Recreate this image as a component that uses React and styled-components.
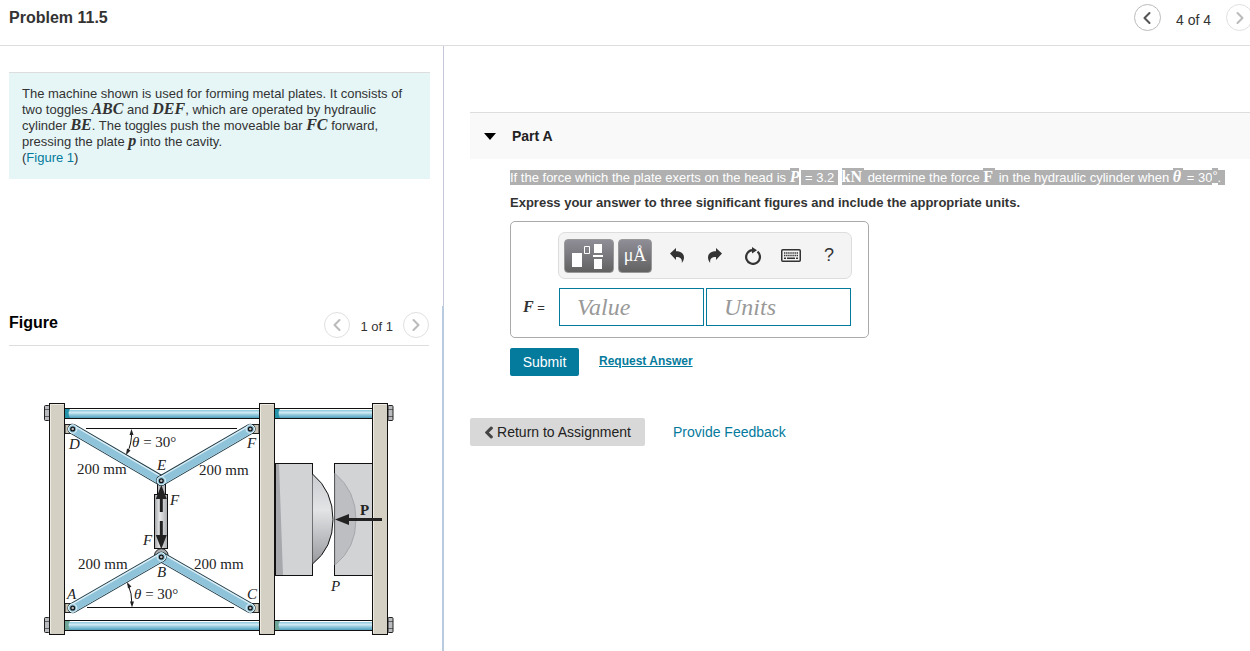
import React, { useState } from "react";
import styled, { createGlobalStyle } from "styled-components";
import { FiChevronLeft, FiChevronRight } from "react-icons/fi";
import { FaChevronLeft } from "react-icons/fa";

const App = () => {
  const [open, setOpen] = useState(true);
  const [value, setValue] = useState("");
  const [units, setUnits] = useState("");

  return (
    <>
      <GlobalStyle />
      <Page>
        <Header>
          <h1>Problem 11.5</h1>
          <Pager $size={27} $gap={15} $font={14}>
            <button type="button" aria-label="Previous problem">
              <FiChevronLeft />
            </button>
            <span>4 of 4</span>
            <button type="button" aria-label="Next problem" disabled>
              <FiChevronRight />
            </button>
          </Pager>
        </Header>

        <Content>
          <Side>
            <ProblemArea>
              <Intro>
                The machine shown is used for forming metal plates. It consists
                of two toggles <Var>ABC</Var> and <Var>DEF</Var>, which are
                operated by hydraulic cylinder <Var>BE</Var>. The toggles push
                the moveable bar <Var>FC</Var> forward, pressing the plate{" "}
                <Var>p</Var> into the cavity.
                <br />(<a href="#figure">Figure 1</a>)
              </Intro>
            </ProblemArea>
            <FigureArea id="figure">
              <FigureHead>
                <h2>Figure</h2>
                <Pager $size={26} $gap={10} $font={13}>
                  <button type="button" aria-label="Previous figure" disabled>
                    <FiChevronLeft />
                  </button>
                  <span>1 of 1</span>
                  <button type="button" aria-label="Next figure" disabled>
                    <FiChevronRight />
                  </button>
                </Pager>
              </FigureHead>
              <Machine />
            </FigureArea>
          </Side>

          <Main>
            <PartHead type="button" onClick={() => setOpen(!open)}>
              <Caret viewBox="0 0 12 7" $open={open}>
                <path d="M0 0h12L6 7z" />
              </Caret>
              Part A
            </PartHead>
            {open && (
              <PartBody>
                <Question>
                  <mark>If the force which the plate exerts on the head is </mark>
                  <MarkVar $gap>P</MarkVar>
                  <mark> = 3.2&nbsp;</mark> <MarkVar $upright>kN</MarkVar>
                  <mark> determine the force </mark>
                  <MarkVar $upright>F</MarkVar>
                  <mark> in the hydraulic cylinder when </mark>
                  <MarkVar>θ</MarkVar>
                  <mark> = 30</mark>
                  <Degree>°</Degree>
                  <mark>.&nbsp;</mark>
                </Question>
                <Hint>
                  Express your answer to three significant figures and include
                  the appropriate units.
                </Hint>
                <AnswerBox>
                  <Toolbar>
                    <DarkTool type="button" aria-label="Templates" $wide>
                      <svg viewBox="0 0 34 28" width="34" height="28">
                        <path d="M0 11h10v14H0zM22 2h8v9h-8zM21 13h10v2H21zM22 17h8v10h-8z" />
                        <path d="M12.500 4.500h5v7h-5z" fill="none" stroke="#fff" />
                      </svg>
                    </DarkTool>
                    <DarkTool type="button">μÅ</DarkTool>
                    <Tool type="button" aria-label="Undo">
                      <UndoIcon />
                    </Tool>
                    <Tool type="button" aria-label="Redo">
                      <RedoIcon />
                    </Tool>
                    <Tool type="button" aria-label="Reset">
                      <ResetIcon />
                    </Tool>
                    <Tool type="button" aria-label="Keyboard shortcuts">
                      <KeyboardIcon />
                    </Tool>
                    <Tool type="button">?</Tool>
                  </Toolbar>
                  <Fields>
                    <label htmlFor="value">
                      <Var>F</Var> =
                    </label>
                    <input
                      id="value"
                      placeholder="Value"
                      value={value}
                      onChange={(e) => setValue(e.target.value)}
                    />
                    <input
                      aria-label="Units"
                      placeholder="Units"
                      value={units}
                      onChange={(e) => setUnits(e.target.value)}
                    />
                  </Fields>
                </AnswerBox>
                <Actions>
                  <Submit type="button">Submit</Submit>
                  <a href="#answer">Request Answer</a>
                </Actions>
              </PartBody>
            )}
            <Bottom>
              <Return type="button">
                <FaChevronLeft />
                Return to Assignment
              </Return>
              <a href="#feedback">Provide Feedback</a>
            </Bottom>
          </Main>
        </Content>
      </Page>
    </>
  );
};

const UndoIcon = () => (
  <svg viewBox="0 0 14 15" width="14" height="15">
    <path d="M0 5.500L6 0v3.200c5 0 8 2.600 8 6.300 0 2.200-1 4-2.200 5.500.4-3.600-.6-6-5.800-6v3z" />
  </svg>
);

const RedoIcon = () => (
  <svg viewBox="0 0 14 15" width="14" height="15">
    <path d="M14 5.500L8 0v3.200c-5 0-8 2.600-8 6.300C0 11.700 1 13.500 2.200 15c-.4-3.600.6-6 5.800-6v3z" />
  </svg>
);

const ResetIcon = () => (
  <svg viewBox="0 0 18 18" width="18" height="18">
    <path
      d="M13.500 4.700A6.900 6.900 0 1 1 8.500 3.100"
      fill="none"
      stroke="#333"
      strokeWidth="2.200"
    />
    <path d="M8 0l5 3.300L8 6.600z" />
  </svg>
);

const KeyboardIcon = () => (
  <svg viewBox="0 0 20 13" width="20" height="13">
    <rect
      x="0.750"
      y="0.750"
      width="18.500"
      height="11.500"
      rx="1"
      fill="none"
      stroke="#333"
      strokeWidth="1.500"
    />
    <path
      d="M3 4h14M3 6.500h14"
      stroke="#333"
      strokeWidth="1.400"
      strokeDasharray="1.400 0.700"
    />
    <path d="M3 8.500h2v1.500H3zM6 8.500h8v1.500H6zM15 8.500h2v1.500h-2z" />
  </svg>
);

// one toggle link, drawn between its two pins
const Link = ({ from, to }) => (
  <g strokeLinecap="round">
    <path d={`M${from}L${to}`} stroke="#1f3a45" strokeWidth="10.600" />
    <path d={`M${from}L${to}`} stroke="#d9eef6" strokeWidth="8.800" />
    <path
      d={`M${from}L${to}`}
      stroke="#8fc3da"
      strokeWidth="7"
      transform="translate(0 0.700)"
    />
  </g>
);

const Rod = ({ x, y, width, tip }) => (
  <g>
    <rect x={x} y={y} width={width} height="11" fill="#111" />
    <rect x={x} y={y + 1} width={width} height="9" fill="#fff" />
    <rect x={x} y={y + 2} width={width} height="8" fill="url(#rod)" />
    <path d={`M${x} ${y + 1}h5q-3 4 0 9h-5z`} fill={tip} />
  </g>
);

const Post = ({ x }) => (
  <g>
    <rect
      x={x}
      y="403.500"
      width="15"
      height="231"
      fill="#d5d0c4"
      stroke="#111"
    />
    <path d={`M${x + 1} 633V404.500h13`} fill="none" stroke="#eeebe3" />
  </g>
);

const Nut = ({ x, y }) => (
  <g>
    <rect
      x={x}
      y={y}
      width="5"
      height="15"
      rx="1"
      fill="#b9bbbe"
      stroke="#222"
    />
    <path d={`M${x} ${y + 4}h5M${x} ${y + 11}h5`} stroke="#222" strokeWidth="0.600" />
  </g>
);

const Pin = ({ x, y }) => (
  <g>
    <circle cx={x} cy={y} r="4.200" fill="#8fc3da" stroke="#e8f5fa" />
    <circle cx={x} cy={y} r="1.900" fill="#b9bbbe" stroke="#111" strokeWidth="1.300" />
  </g>
);

const Machine = () => (
  <Drawing viewBox="44 402 352 234" role="img" aria-label="Forming machine">
    <defs>
      <linearGradient id="rod" x1="0" y1="0" x2="0" y2="1">
        <stop offset="0" stopColor="#8cc7dc" />
        <stop offset="0.350" stopColor="#d4ebf4" />
        <stop offset="0.500" stopColor="#a5d3e5" />
        <stop offset="1" stopColor="#4f9fbd" />
      </linearGradient>
      <linearGradient id="cyl" x1="0" y1="0" x2="1" y2="0">
        <stop offset="0" stopColor="#9fa2a6" />
        <stop offset="0.400" stopColor="#e8e9ea" />
        <stop offset="1" stopColor="#a8abae" />
      </linearGradient>
      <linearGradient id="dome" x1="0" y1="0" x2="0" y2="1">
        <stop offset="0" stopColor="#c9cbce" />
        <stop offset="0.400" stopColor="#e3e4e6" />
        <stop offset="1" stopColor="#98999d" />
      </linearGradient>
    </defs>

    <Rod x={65} y={408} width={195} tip="#2492a8" />
    <Rod x={275} y={408} width={98} tip="#2492a8" />
    <Rod x={65} y={620} width={195} tip="#6da597" />
    <Rod x={275} y={620} width={98} tip="#6da597" />
    <Nut x={44.5} y={405.5} />
    <Nut x={44.5} y={617.5} />
    <Nut x={388} y={405.5} />
    <Nut x={388} y={617.5} />

    <g fill="#c9c4b6" stroke="#222">
      <path d="M65 424.500h9v9h-9zM250 424.500h9v9h-9z" />
      <path d="M65 603.500h9v9h-9zM250 603.500h9v9h-9z" />
    </g>

    <rect x="275.500" y="463.500" width="37" height="112" fill="#d1d3d5" stroke="#111" />
    <path d="M276 464h3l4 111h-7z" fill="#a7a8ac" />
    <path d="M312.500 474Q333 491 333 519.500T312.500 564z" fill="url(#dome)" />
    <path
      d="M312.500 474Q333 491 333 519.500T312.500 564"
      fill="none"
      stroke="#111"
    />
    <rect x="334.500" y="463.500" width="38" height="112" fill="#d1d3d5" stroke="#111" />
    <path
      d="M335 473.500Q356 491 356 519.500T335 565z"
      fill="#bdbec1"
      stroke="#a7a8ac"
    />

    <Post x={49.5} />
    <Post x={259.5} />
    <Post x={372.5} />

    <rect x="157.500" y="484" width="8" height="11" fill="#b9bbbe" stroke="#111" />
    <rect x="154.500" y="494.500" width="13" height="54" fill="url(#cyl)" stroke="#111" />
    <circle cx="161.300" cy="555.500" r="6.800" fill="#a8abae" stroke="#222" />

    <Link from="72.700 429" to="161.300 480.700" />
    <Link from="250.300 429" to="161.300 480.700" />
    <Link from="250.300 608" to="161.300 557" />
    <Link from="72.700 608" to="161.300 557" />
    <Pin x={72.7} y={429} />
    <Pin x={250.3} y={429} />
    <Pin x={161.3} y={480.7} />
    <Pin x={161.3} y={557} />
    <Pin x={72.7} y={608} />
    <Pin x={250.3} y={608} />

    <g fill="none" stroke="#111">
      <path d="M86 428.500h151M87 607.500h147" />
      <path d="M131.500 431Q132 444 127 453M132 605Q132 593 128 584" />
    </g>
    <path d="M131.500 429l2 6h-4zM126 455l1-6.500 3.500 2zM132 607.500l-2-6h4zM127 582l1 6.500 3.500-2z" />

    <path d="M161.300 485l5.500 14h-4v13h-3v-13h-4z" />
    <path d="M161.300 549l5.500-14h-4v-14h-3v14h-4z" />
    <path d="M335 519.500l14-5.500v4h33v3h-33v4z" />

    <g fontSize="15">
      <text x="132" y="447"><tspan fontStyle="italic">θ</tspan> = 30°</text>
      <text x="134" y="599"><tspan fontStyle="italic">θ</tspan> = 30°</text>
      <text x="77" y="474">200 mm</text>
      <text x="199" y="475">200 mm</text>
      <text x="78" y="569">200 mm</text>
      <text x="194" y="569">200 mm</text>
    </g>
    <g fontSize="15" fontStyle="italic">
      <text x="69" y="449">D</text>
      <text x="247" y="448">F</text>
      <text x="157" y="470">E</text>
      <text x="170" y="505">F</text>
      <text x="143" y="545">F</text>
      <text x="157" y="577">B</text>
      <text x="67" y="599">A</text>
      <text x="247" y="599">C</text>
      <text x="331" y="591">P</text>
    </g>
    <text x="360" y="515" fontSize="15" fontWeight="bold">P</text>
  </Drawing>
);

const GlobalStyle = createGlobalStyle`
  * {
    box-sizing: border-box;
  }
  body {
    margin: 0;
    background: #fff;
    color: #333;
    font-family: "Liberation Sans", Arial, sans-serif;
    font-size: 13px;
    overflow-x: hidden;
  }
  h1, h2, p {
    margin: 0;
  }
  button {
    padding: 0;
    border: 0;
    background: none;
    font-family: inherit;
    cursor: pointer;
  }
  a {
    color: #047a9c;
    text-decoration: none;
  }
`;

const Page = styled.div`
  display: flex;
  flex-direction: column;
  min-height: 100vh;
`;

const Header = styled.header`
  display: flex;
  justify-content: space-between;
  height: 46px;
  margin-right: -3px;
  padding: 4px 0 0 9px;
  border-bottom: 1px solid #ddd;

  & > h1 {
    padding-top: 4px;
    font-size: 16px;
    line-height: 20px;
  }
`;

const Pager = styled.div`
  display: flex;
  align-items: center;
  gap: ${({ $gap }) => $gap}px;
  height: ${({ $size }) => $size}px;

  & > span {
    padding-top: 4px;
    font-size: ${({ $font }) => $font}px;
    line-height: 16px;
  }
  & > button {
    display: flex;
    align-items: center;
    justify-content: center;
    width: ${({ $size }) => $size}px;
    height: ${({ $size }) => $size}px;
    border: 1px solid #bbb;
    border-radius: 50%;
    color: #555;

    &:disabled {
      border-color: #e0e0e0;
      color: #bbb;
    }
  }
  & svg {
    width: 20px;
    height: 20px;
    stroke-width: 2.5;
  }
`;

const Content = styled.div`
  display: grid;
  grid-template-columns: 444px 1fr;
  flex: 1;
`;

const Side = styled.aside`
  display: flex;
  flex-direction: column;
`;

const ProblemArea = styled.section`
  height: 260px;
  padding: 26px 13px 0 9px;
  border-right: 1px solid #c3c9d6;
`;

const Intro = styled.p`
  padding: 13px 20px 13px 13px;
  border-top: 1px solid #ddd;
  background: #e6f6f7;
  line-height: 16px;
`;

const Var = styled.b`
  font-family: "Liberation Serif", "Times New Roman", serif;
  font-size: 16px;
  font-style: ${({ $upright }) => ($upright ? "normal" : "italic")};
  line-height: 0;
`;

const FigureArea = styled.section`
  flex: 1;
  padding: 6px 13px 0 9px;
  border-right: 2px solid #b8cbdf;
`;

const FigureHead = styled.div`
  display: flex;
  justify-content: space-between;
  height: 34px;
  border-bottom: 1px solid #ddd;

  & > h2 {
    color: #000;
    font-size: 16px;
    line-height: 22px;
  }
`;

const Drawing = styled.svg`
  display: block;
  width: 352px;
  margin: 56px 0 0 35px;
  fill: #222;
  font-family: "Liberation Serif", "Times New Roman", serif;
`;

const Main = styled.main`
  min-width: 0;
  padding: 66px 0 0 26px;
`;

const PartHead = styled.button`
  display: flex;
  align-items: center;
  gap: 16px;
  width: 100%;
  height: 47px;
  padding-left: 14px;
  border-top: 1px solid #ddd;
  background: #f9f9f9;
  color: #222;
  font-size: 14px;
  font-weight: bold;
`;

const Caret = styled.svg`
  width: 12px;
  height: 7px;
  transform: ${({ $open }) => ($open ? "none" : "rotate(-90deg)")};
`;

const PartBody = styled.div`
  padding: 9px 20px 0 40px;
`;

const Question = styled.p`
  line-height: 20px;
  white-space: nowrap;

  & mark {
    background: #b0b0b0;
    color: #fff;
  }
`;

const MarkVar = styled(Var)`
  padding-right: ${({ $gap }) => ($gap ? 0 : 2)}px;
  margin-right: ${({ $gap }) => ($gap ? 2 : 0)}px;
  background: #b0b0b0;
  color: #fff;
`;

const Degree = styled.mark`
  line-height: 0;
  vertical-align: 2px;
`;

const Hint = styled.p`
  margin-top: 6px;
  font-weight: bold;
  line-height: 18px;
`;

const AnswerBox = styled.div`
  width: 359px;
  margin-top: 9px;
  padding: 10px 16px 11px 10px;
  border: 1px solid #aaa;
  border-radius: 5px;
`;

const Toolbar = styled.div`
  display: flex;
  align-items: center;
  height: 47px;
  margin-left: 37px;
  padding-left: 5px;
  border: 1px solid #ddd;
  border-radius: 7px;
  background: #f4f4f4;
`;

const DarkTool = styled.button`
  display: flex;
  align-items: center;
  justify-content: center;
  width: ${({ $wide }) => ($wide ? 50 : 34)}px;
  height: 34px;
  margin-right: ${({ $wide }) => ($wide ? 4 : 6)}px;
  border: 1px solid #999;
  border-radius: 4px;
  background: linear-gradient(#8f8e97, #626262);
  color: #fff;
  fill: #fff;
  font-family: "Liberation Serif", "Times New Roman", serif;
  font-size: 18px;
`;

const Tool = styled.button`
  display: flex;
  align-items: center;
  justify-content: center;
  width: 38px;
  height: 34px;
  color: #333;
  fill: #333;
  font-size: 18px;
`;

const Fields = styled.div`
  display: grid;
  grid-template-columns: 36px 1fr 1fr;
  align-items: center;
  gap: 2px;
  margin-top: 9px;
  padding-right: 1px;

  & > label {
    padding-left: 2px;
  }
  & > input {
    width: 100%;
    height: 38px;
    padding: 0 17px;
    border: 1px solid #047a9c;
    font-family: "Liberation Serif", "Times New Roman", serif;
    font-size: 24px;

    &::placeholder {
      color: #999;
      font-style: italic;
    }
    &:focus {
      outline: none;
    }
  }
`;

const Actions = styled.div`
  display: flex;
  gap: 20px;
  margin-top: 10px;

  & > a {
    padding-top: 5px;
    font-size: 12px;
    font-weight: bold;
    line-height: 16px;
    text-decoration: underline;
  }
`;

const Submit = styled.button`
  width: 69px;
  height: 28px;
  border-radius: 2px;
  background: #047a9c;
  color: #fff;
  font-size: 14px;
`;

const Bottom = styled.div`
  display: flex;
  align-items: center;
  gap: 28px;
  margin-top: 42px;
  font-size: 14px;
`;

const Return = styled.button`
  display: flex;
  align-items: center;
  justify-content: center;
  gap: 3px;
  width: 175px;
  height: 28px;
  border-radius: 2px;
  background: #d8d8d8;
  color: #222;
  font-size: 14px;

  & > svg {
    width: 10px;
    height: 13px;
    color: #444;
    stroke: #444;
    stroke-width: 40;
  }
`;

export default App;
